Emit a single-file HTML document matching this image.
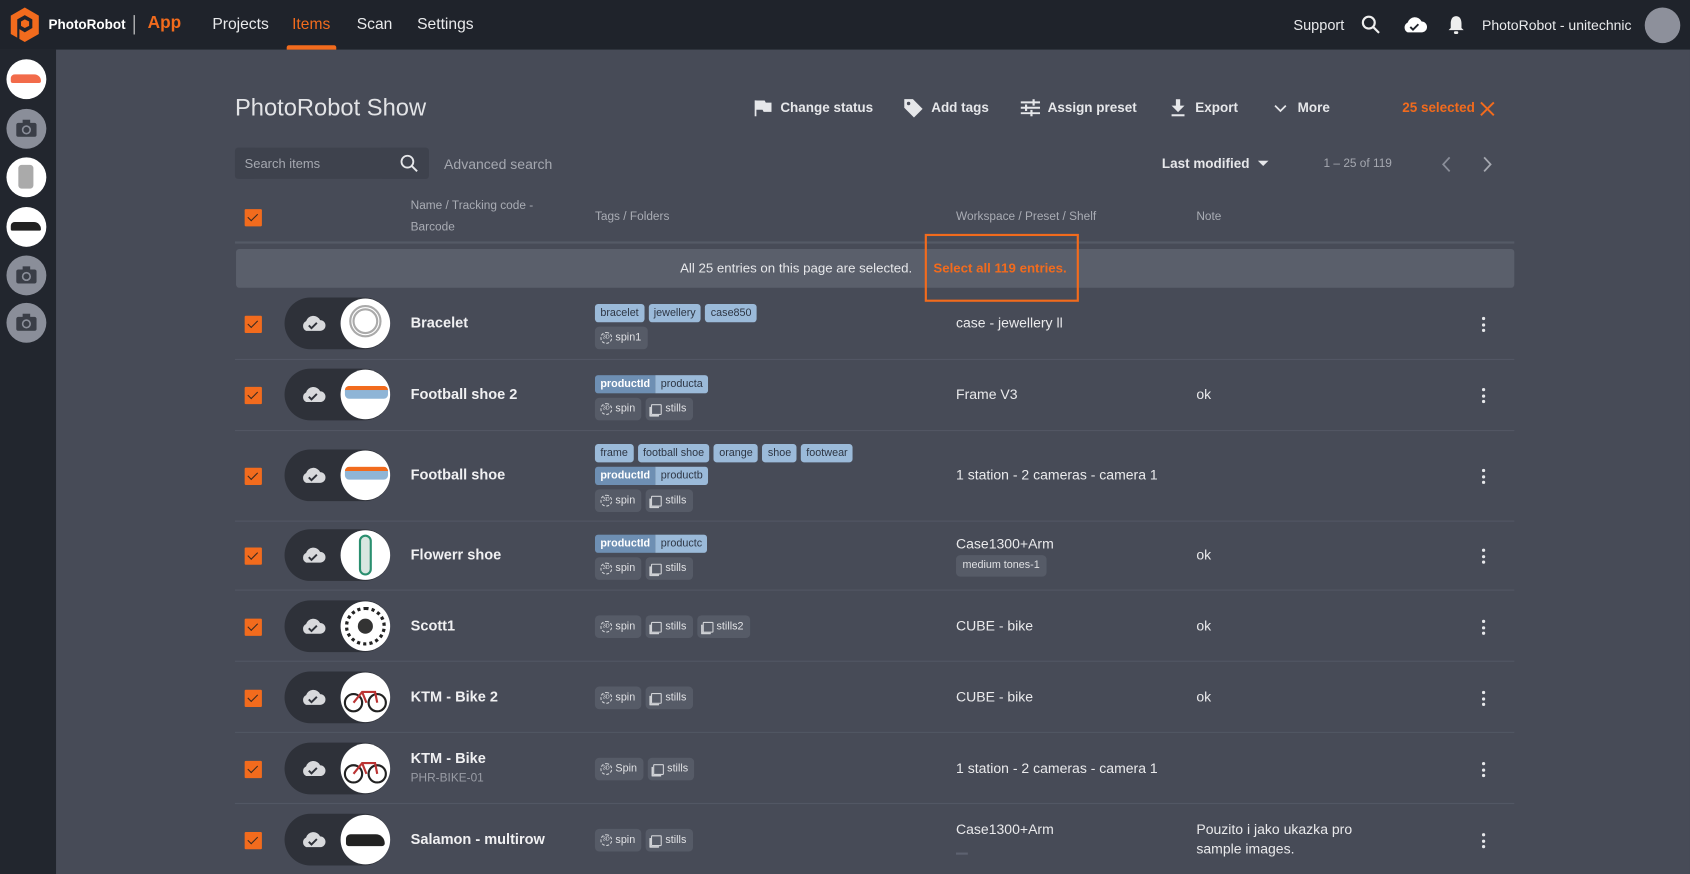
<!DOCTYPE html>
<html><head><meta charset="utf-8"><style>
*{box-sizing:border-box;margin:0;padding:0}
html,body{width:1690px;height:874px;overflow:hidden;background:#474b57;font-family:"Liberation Sans",sans-serif}
#w{position:absolute;left:0;top:0;width:1568px;height:811px;transform:scale(1.0778);transform-origin:0 0;background:#474b57;color:#e6e7ea}
.a{position:absolute;white-space:nowrap}
.top{position:absolute;left:0;top:0;width:1568px;height:46px;background:#1f232b}
.nav{font-size:14.5px;color:#e9eaec;top:15px}
.side{position:absolute;left:0;top:46px;width:52px;height:765px;background:#22262e}
.sc{position:absolute;left:6px;width:37px;height:37px;border-radius:50%;background:#fff;overflow:hidden}
.sg{background:#8a8e99}
.tb{font-size:12.5px;font-weight:bold;color:#e6e7ea;top:93px}
.hd{font-size:11px;color:#a9acb4}
.line{position:absolute;left:218px;width:1187px;height:1px;background:#555a66}
.cb{position:absolute;left:227px;width:16px;height:16px;background:#f26b1d;border-radius:1px}
.cb:after{content:"";position:absolute;left:5px;top:2px;width:4px;height:8px;border:solid #3a2a20;border-width:0 1.5px 1.5px 0;transform:rotate(45deg)}
.pill{position:absolute;left:264px;width:98px;height:48px;background:#2e3139;border-radius:24px}
.pill:before{content:"";position:absolute;left:14px;top:16px;width:24px;height:17px;background:url() ;}
.cl{position:absolute;left:14px;top:15px}
.th{position:absolute;right:0;top:1px;width:46px;height:46px;border-radius:50%;background:#fff;overflow:hidden}
.name{font-size:13.5px;font-weight:bold;color:#f0f0f2;left:381px}
.tags{position:absolute;left:552px}
.tr{display:flex;gap:4px;margin-bottom:4px}
.t{height:17px;line-height:17px;font-size:10px;padding:0 5px;border-radius:3px;background:#9bbad9;color:#2d3543}
.t2{display:flex;border-radius:3px;overflow:hidden;height:17px;line-height:17px;font-size:10px}
.t2 b{background:#6e8fb3;color:#fff;padding:0 5px}
.t2 span{background:#9bbad9;color:#2d3543;padding:0 5px}
.f{height:21px;line-height:21px;font-size:10px;padding:0 6px 0 5px;border-radius:4px;background:#565b67;color:#e0e1e4;display:flex;align-items:center;gap:3px}
.ic3{width:11px;height:11px;border:1.3px dashed #d0d2d6;border-radius:50%;font-size:5px;line-height:9px;text-align:center}
.ic4{width:10px;height:10px;border:1.5px solid #d0d2d6;border-radius:1px;box-shadow:-2px 2px 0 -0.5px #d0d2d6}
.ws{font-size:13px;left:887px;color:#eaeaec}
.note{font-size:13px;left:1110px;color:#eaeaec}
.keb{position:absolute;left:1375px;width:4px}
.keb i{display:block;width:3px;height:3px;border-radius:50%;background:#e6e7ea;margin-bottom:2.5px}
.sep{position:absolute;left:218px;width:1187px;height:1px;background:#525764}
</style></head><body><div id="w">
<svg width="0" height="0" style="position:absolute"><defs><symbol id="cld" viewBox="0 0 24 18"><path d="M6 16 A5 5 0 0 1 6 7 A7 7 0 0 1 19 6 A5 5 0 0 1 19 16Z" fill="#d8d9dc"/><path d="M8.5 11 l2.5 2.5 l5 -5" stroke="#2e3139" stroke-width="1.8" fill="none"/></symbol></defs></svg>
<div class="top"></div>
<svg class="a" style="left:8px;top:6px" width="30" height="34" viewBox="0 0 30 34"><polygon points="15,1 28,8.5 28,25.5 15,33 2,25.5 2,8.5" fill="#f26b1d"/><polygon points="15,8 22,12 22,20 15,24 10,21 10,31 8,30 8,12" fill="#1f232b"/><polygon points="15,12 19,14 19,18 15,20 11.5,18 11.5,14" fill="#f26b1d"/></svg>
<div class="a" style="left:45px;top:16px;font-size:12.5px;font-weight:bold;color:#fff">PhotoRobot</div>
<div class="a" style="left:124px;top:14px;width:1px;height:18px;background:#ddd"></div>
<div class="a" style="left:137px;top:13px;font-size:16px;font-weight:bold;color:#f26b1d">App</div>
<div class="a nav" style="left:197px">Projects</div>
<div class="a nav" style="left:271px;color:#f26b1d">Items</div>
<div class="a" style="left:266px;top:42px;width:46px;height:4px;background:#f26b1d;border-radius:2px 2px 0 0"></div>
<div class="a nav" style="left:331px">Scan</div>
<div class="a nav" style="left:387px">Settings</div>
<div class="a" style="left:1200px;top:16px;font-size:13.5px;color:#e9eaec">Support</div>
<svg class="a" style="left:1263px;top:14px" width="18" height="18"><circle cx="7" cy="7" r="5.5" stroke="#eee" stroke-width="2" fill="none"/><line x1="11" y1="11" x2="16.5" y2="16.5" stroke="#eee" stroke-width="2"/></svg>
<svg class="a" style="left:1300px;top:14px" width="24" height="18" viewBox="0 0 24 18"><path d="M6 16 A5 5 0 0 1 6 7 A7 7 0 0 1 19 6 A5 5 0 0 1 19 16Z" fill="#fff"/><path d="M8.5 11 l2.5 2.5 l5 -5" stroke="#1f232b" stroke-width="1.8" fill="none"/></svg>
<svg class="a" style="left:1343px;top:13px" width="16" height="20"><path d="M8 2 C4 2 3 6 3 9 L3 13 L1 15 L15 15 L13 13 L13 9 C13 6 12 2 8 2Z" fill="#eee"/><rect x="6" y="16" width="4" height="2.5" rx="1" fill="#eee"/></svg>
<div class="a" style="left:1375px;top:16px;font-size:13px;color:#e9eaec">PhotoRobot - unitechnic</div>
<div class="a" style="left:1526px;top:7px;width:33px;height:33px;border-radius:50%;background:#8d909b"></div>

<div class="side"></div>
<div class="sc" style="top:55px"><div style="position:absolute;left:4px;top:14px;width:28px;height:8px;background:#f26b4a;border-radius:6px 10px 3px 3px"></div></div>
<div class="sc sg" style="top:101px"></div>
<div class="sc" style="top:146px"><div style="position:absolute;left:11px;top:7px;width:14px;height:22px;background:#aaa;border-radius:3px"></div></div>
<div class="sc" style="top:192px"><div style="position:absolute;left:4px;top:14px;width:28px;height:8px;background:#222;border-radius:5px 9px 2px 2px"></div></div>
<div class="sc sg" style="top:237px"></div>
<div class="sc sg" style="top:281px"></div>
<svg class="a" style="left:15px;top:111px" width="19" height="16"><rect x="0" y="3" width="19" height="13" rx="2" fill="#3a3e47"/><rect x="6" y="0" width="7" height="4" fill="#3a3e47"/><circle cx="9.5" cy="9.5" r="3.5" fill="none" stroke="#8a8e99" stroke-width="1.5"/></svg>
<svg class="a" style="left:15px;top:247px" width="19" height="16"><rect x="0" y="3" width="19" height="13" rx="2" fill="#3a3e47"/><rect x="6" y="0" width="7" height="4" fill="#3a3e47"/><circle cx="9.5" cy="9.5" r="3.5" fill="none" stroke="#8a8e99" stroke-width="1.5"/></svg>
<svg class="a" style="left:15px;top:291px" width="19" height="16"><rect x="0" y="3" width="19" height="13" rx="2" fill="#3a3e47"/><rect x="6" y="0" width="7" height="4" fill="#3a3e47"/><circle cx="9.5" cy="9.5" r="3.5" fill="none" stroke="#8a8e99" stroke-width="1.5"/></svg>

<div class="a" style="left:218px;top:87px;font-size:22px;color:#e2e3e6">PhotoRobot Show</div>
<svg class="a" style="left:700px;top:93px" width="16" height="15"><path d="M1 0 V15 M1 1 H9 L10 3 H15 V10 H9 L8 8 H1" fill="#e6e7ea" stroke="#e6e7ea" stroke-width="1.6"/></svg>
<div class="a tb" style="left:724px">Change status</div>
<svg class="a" style="left:838px;top:91px" width="19" height="19"><path d="M1 1 H9 L18 10 L10 18 L1 9Z" fill="#e6e7ea"/><circle cx="5" cy="5" r="1.6" fill="#474b57"/></svg>
<div class="a tb" style="left:864px">Add tags</div>
<svg class="a" style="left:947px;top:92px" width="18" height="16" stroke="#e6e7ea" stroke-width="1.8"><path d="M0 3H18M0 8H18M0 13H18"/><path d="M12 0V6M5 5V11M10 10V16" stroke-width="2"/></svg>
<div class="a tb" style="left:972px">Assign preset</div>
<svg class="a" style="left:1086px;top:92px" width="14" height="16"><path d="M5 0H9V6H13L7 12L1 6H5Z" fill="#e6e7ea"/><rect x="1" y="14" width="12" height="2" fill="#e6e7ea"/></svg>
<div class="a tb" style="left:1109px">Export</div>
<svg class="a" style="left:1182px;top:97px" width="12" height="8"><path d="M1 1L6 6L11 1" stroke="#e6e7ea" stroke-width="1.6" fill="none"/></svg>
<div class="a tb" style="left:1204px">More</div>
<div class="a tb" style="left:1301px;color:#f26b1d">25 selected</div>
<svg class="a" style="left:1373px;top:94px" width="14" height="14"><path d="M1 1L13 13M13 1L1 13" stroke="#f26b1d" stroke-width="1.8"/></svg>

<div class="a" style="left:218px;top:137px;width:180px;height:29px;background:#3e424d;border-radius:3px"></div>
<div class="a" style="left:227px;top:145px;font-size:12px;color:#a5a8b0">Search items</div>
<svg class="a" style="left:371px;top:143px" width="17" height="17"><circle cx="7" cy="7" r="5.5" stroke="#e6e7ea" stroke-width="1.7" fill="none"/><line x1="11" y1="11" x2="16" y2="16" stroke="#e6e7ea" stroke-width="1.8"/></svg>
<div class="a" style="left:412px;top:145px;font-size:13px;color:#a5a8b0">Advanced search</div>
<div class="a" style="left:1078px;top:145px;font-size:12.5px;font-weight:bold;color:#e6e7ea">Last modified</div>
<svg class="a" style="left:1167px;top:149px" width="10" height="6"><path d="M0 0H10L5 5Z" fill="#e6e7ea"/></svg>
<div class="a" style="left:1228px;top:146px;font-size:11px;color:#a5a8b0">1 – 25 of 119</div>
<svg class="a" style="left:1337px;top:145px" width="10" height="15"><path d="M8 1L2 7.5L8 14" stroke="#8a8e99" stroke-width="1.6" fill="none"/></svg>
<svg class="a" style="left:1375px;top:145px" width="10" height="15"><path d="M2 1L8 7.5L2 14" stroke="#a5a8b0" stroke-width="1.6" fill="none"/></svg>

<div class="cb" style="top:194px"></div>
<div class="a hd" style="left:381px;top:185px">Name / Tracking code -</div>
<div class="a hd" style="left:381px;top:205px">Barcode</div>
<div class="a hd" style="left:552px;top:195px">Tags / Folders</div>
<div class="a hd" style="left:887px;top:195px">Workspace / Preset / Shelf</div>
<div class="a hd" style="left:1110px;top:195px">Note</div>
<div class="line" style="top:224px;height:2px"></div>
<div class="a" style="left:219px;top:231px;width:1186px;height:36px;background:#5a5f6b;border-radius:3px"></div>
<div class="a" style="left:631px;top:242px;font-size:12.3px;color:#e6e7ea">All 25 entries on this page are selected.</div>
<div class="a" style="left:866px;top:242px;font-size:12.3px;font-weight:bold;color:#f26b1d">Select all 119 entries.</div>
<div class="a" style="left:858px;top:217px;width:143px;height:63px;border:2.5px solid #f26b1d"></div>

<!-- rows -->
<div class="cb" style="top:293px"></div>
<div class="pill" style="top:276px"><svg class="cl" width="24" height="18"><use href="#cld"/></svg><div class="th"><div style="position:absolute;left:8px;top:6px;width:30px;height:30px;border:5px double #aaa;border-radius:50%"></div></div></div>
<div class="a name" style="top:292px">Bracelet</div>
<div class="tags" style="top:282px"><div class="tr"><div class="t">bracelet</div><div class="t">jewellery</div><div class="t">case850</div></div><div class="tr"><div class="f"><div class="ic3">3D</div>spin1</div></div></div>
<div class="a ws" style="top:292px">case - jewellery ll</div>
<div class="keb" style="top:294px"><i></i><i></i><i></i></div>
<div class="sep" style="top:333px"></div>

<div class="cb" style="top:359px"></div>
<div class="pill" style="top:342px"><svg class="cl" width="24" height="18"><use href="#cld"/></svg><div class="th"><div style="position:absolute;left:4px;top:15px;width:40px;height:12px;background:#8fb5d6;border-radius:4px;border-top:4px solid #f26b1d"></div></div></div>
<div class="a name" style="top:358px">Football shoe 2</div>
<div class="tags" style="top:348px"><div class="tr"><div class="t2"><b>productId</b><span>producta</span></div></div><div class="tr"><div class="f"><div class="ic3">3D</div>spin</div><div class="f"><div class="ic4"></div>stills</div></div></div>
<div class="a ws" style="top:358px">Frame V3</div>
<div class="a note" style="top:358px">ok</div>
<div class="keb" style="top:360px"><i></i><i></i><i></i></div>
<div class="sep" style="top:399px"></div>

<div class="cb" style="top:434px"></div>
<div class="pill" style="top:417px"><svg class="cl" width="24" height="18"><use href="#cld"/></svg><div class="th"><div style="position:absolute;left:4px;top:15px;width:40px;height:12px;background:#8fb5d6;border-radius:4px;border-top:4px solid #f26b1d"></div></div></div>
<div class="a name" style="top:433px">Football shoe</div>
<div class="tags" style="top:412px"><div class="tr"><div class="t">frame</div><div class="t">football shoe</div><div class="t">orange</div><div class="t">shoe</div><div class="t">footwear</div></div><div class="tr"><div class="t2"><b>productId</b><span>productb</span></div></div><div class="tr"><div class="f"><div class="ic3">3D</div>spin</div><div class="f"><div class="ic4"></div>stills</div></div></div>
<div class="a ws" style="top:433px">1 station - 2 cameras - camera 1</div>
<div class="keb" style="top:435px"><i></i><i></i><i></i></div>
<div class="sep" style="top:483px"></div>

<div class="cb" style="top:508px"></div>
<div class="pill" style="top:491px"><svg class="cl" width="24" height="18"><use href="#cld"/></svg><div class="th"><div style="position:absolute;left:17px;top:4px;width:12px;height:38px;background:#d9e6e0;border:2px solid #2a8f6f;border-radius:6px"></div></div></div>
<div class="a name" style="top:507px">Flowerr shoe</div>
<div class="tags" style="top:496px"><div class="tr"><div class="t2"><b>productId</b><span>productc</span></div></div><div class="tr"><div class="f"><div class="ic3">3D</div>spin</div><div class="f"><div class="ic4"></div>stills</div></div></div>
<div class="a ws" style="top:497px">Case1300+Arm</div>
<div class="a" style="left:887px;top:515px;height:20px;line-height:20px;padding:0 6px;font-size:10px;background:#565b67;border-radius:4px;color:#e0e1e4">medium tones-1</div>
<div class="a note" style="top:507px">ok</div>
<div class="keb" style="top:509px"><i></i><i></i><i></i></div>
<div class="sep" style="top:547px"></div>

<div class="cb" style="top:574px"></div>
<div class="pill" style="top:557px"><svg class="cl" width="24" height="18"><use href="#cld"/></svg><div class="th"><div style="position:absolute;left:4px;top:5px;width:38px;height:36px;border:3px dotted #222;border-radius:50%"></div><div style="position:absolute;left:16px;top:16px;width:14px;height:14px;background:#333;border-radius:50%"></div></div></div>
<div class="a name" style="top:573px">Scott1</div>
<div class="tags" style="top:571px"><div class="tr"><div class="f"><div class="ic3">3D</div>spin</div><div class="f"><div class="ic4"></div>stills</div><div class="f"><div class="ic4"></div>stills2</div></div></div>
<div class="a ws" style="top:573px">CUBE - bike</div>
<div class="a note" style="top:573px">ok</div>
<div class="keb" style="top:575px"><i></i><i></i><i></i></div>
<div class="sep" style="top:613px"></div>

<div class="cb" style="top:640px"></div>
<div class="pill" style="top:623px"><svg class="cl" width="24" height="18"><use href="#cld"/></svg><div class="th"><svg width="46" height="46"><circle cx="12" cy="28" r="8" stroke="#222" stroke-width="2" fill="none"/><circle cx="34" cy="28" r="8" stroke="#222" stroke-width="2" fill="none"/><path d="M12 28L20 18L32 18L34 28M20 18L24 28" stroke="#b33" stroke-width="2" fill="none"/></svg></div></div>
<div class="a name" style="top:639px">KTM - Bike 2</div>
<div class="tags" style="top:637px"><div class="tr"><div class="f"><div class="ic3">3D</div>spin</div><div class="f"><div class="ic4"></div>stills</div></div></div>
<div class="a ws" style="top:639px">CUBE - bike</div>
<div class="a note" style="top:639px">ok</div>
<div class="keb" style="top:641px"><i></i><i></i><i></i></div>
<div class="sep" style="top:679px"></div>

<div class="cb" style="top:706px"></div>
<div class="pill" style="top:689px"><svg class="cl" width="24" height="18"><use href="#cld"/></svg><div class="th"><svg width="46" height="46"><circle cx="12" cy="28" r="8" stroke="#222" stroke-width="2" fill="none"/><circle cx="34" cy="28" r="8" stroke="#222" stroke-width="2" fill="none"/><path d="M12 28L20 18L32 18L34 28M20 18L24 28" stroke="#b33" stroke-width="2" fill="none"/></svg></div></div>
<div class="a name" style="top:696px">KTM - Bike</div>
<div class="a" style="left:381px;top:716px;font-size:11px;color:#9a9da6">PHR-BIKE-01</div>
<div class="tags" style="top:703px"><div class="tr"><div class="f"><div class="ic3">3D</div>Spin</div><div class="f"><div class="ic4"></div>stills</div></div></div>
<div class="a ws" style="top:705px">1 station - 2 cameras - camera 1</div>
<div class="keb" style="top:707px"><i></i><i></i><i></i></div>
<div class="sep" style="top:745px"></div>

<div class="cb" style="top:772px"></div>
<div class="pill" style="top:755px"><svg class="cl" width="24" height="18"><use href="#cld"/></svg><div class="th"><div style="position:absolute;left:5px;top:18px;width:36px;height:11px;background:#222;border-radius:5px 10px 3px 3px"></div></div></div>
<div class="a name" style="top:771px">Salamon - multirow</div>
<div class="tags" style="top:769px"><div class="tr"><div class="f"><div class="ic3">3D</div>spin</div><div class="f"><div class="ic4"></div>stills</div></div></div>
<div class="a ws" style="top:762px">Case1300+Arm</div>
<div class="a" style="left:887px;top:791px;width:11px;height:2px;background:#5d6270"></div>
<div class="a note" style="top:762px">Pouzito i jako ukazka pro</div>
<div class="a note" style="top:780px">sample images.</div>
<div class="keb" style="top:773px"><i></i><i></i><i></i></div>
</div></body></html>
